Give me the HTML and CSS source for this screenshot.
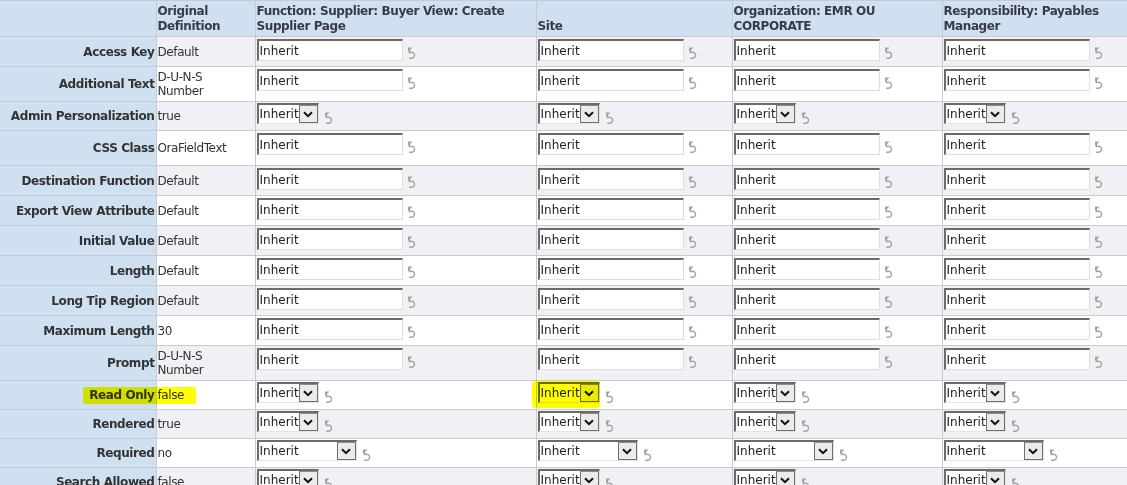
FILE: index.html
```html
<!DOCTYPE html>
<html lang="en">
<head>
<meta charset="utf-8">
<title>Personalization</title>
<link rel="stylesheet" href="styles.css">
</head>
<body>
<svg class="defs" width="0" height="0" aria-hidden="true">
  <symbol id="reset" viewBox="0 0 8 12">
    <path d="M0 0.5 L4.5 0.5 L0 5 Z" fill="#a3a3a3"/>
    <path d="M1.4 2.5 L1.4 5.6 C3 5.1 5.4 5.2 6.3 7 C7.2 9 5.8 11.2 3.6 11.2 L1.2 11.2" fill="none" stroke="#a3a3a3" stroke-width="1.4"/>
  </symbol>
  <symbol id="chev" viewBox="0 0 10 7">
    <path d="M1 1.2 L5 5.2 L9 1.2" fill="none" stroke="#111" stroke-width="2"/>
  </symbol>
</svg>
<div class="page">
<table class="grid">
  <colgroup>
    <col class="c-label"><col class="c-orig"><col class="c-func"><col class="c-site"><col class="c-org"><col class="c-resp">
  </colgroup>
  <thead>
    <tr class="head">
      <th class="corner"></th>
      <th>Original<br>Definition</th>
      <th>Function: Supplier: Buyer View: Create<br>Supplier Page</th>
      <th>Site</th>
      <th>Organization: EMR OU<br>CORPORATE</th>
      <th>Responsibility: Payables<br>Manager</th>
    </tr>
  </thead>
  <tbody>
    <tr class="h30 alt">
      <th class="label">Access Key</th><td class="orig">Default</td>
      <td class="fld"><span class="ctl"><input class="txt" value="Inherit"><svg class="rs"><use href="#reset"/></svg></span></td>
      <td class="fld"><span class="ctl"><input class="txt" value="Inherit"><svg class="rs"><use href="#reset"/></svg></span></td>
      <td class="fld"><span class="ctl"><input class="txt" value="Inherit"><svg class="rs"><use href="#reset"/></svg></span></td>
      <td class="fld"><span class="ctl"><input class="txt" value="Inherit"><svg class="rs"><use href="#reset"/></svg></span></td>
    </tr>
    <tr class="h35">
      <th class="label">Additional Text</th><td class="orig">D-U-N-S<br>Number</td>
      <td class="fld"><span class="ctl"><input class="txt" value="Inherit"><svg class="rs"><use href="#reset"/></svg></span></td>
      <td class="fld"><span class="ctl"><input class="txt" value="Inherit"><svg class="rs"><use href="#reset"/></svg></span></td>
      <td class="fld"><span class="ctl"><input class="txt" value="Inherit"><svg class="rs"><use href="#reset"/></svg></span></td>
      <td class="fld"><span class="ctl"><input class="txt" value="Inherit"><svg class="rs"><use href="#reset"/></svg></span></td>
    </tr>
    <tr class="h29 alt">
      <th class="label">Admin Personalization</th><td class="orig">true</td>
      <td class="fld sfld"><span class="ctl"><span class="sel"><select><option>Inherit</option></select><span class="btn"><svg><use href="#chev"/></svg></span></span><svg class="rs"><use href="#reset"/></svg></span></td>
      <td class="fld sfld"><span class="ctl"><span class="sel"><select><option>Inherit</option></select><span class="btn"><svg><use href="#chev"/></svg></span></span><svg class="rs"><use href="#reset"/></svg></span></td>
      <td class="fld sfld"><span class="ctl"><span class="sel"><select><option>Inherit</option></select><span class="btn"><svg><use href="#chev"/></svg></span></span><svg class="rs"><use href="#reset"/></svg></span></td>
      <td class="fld sfld"><span class="ctl"><span class="sel"><select><option>Inherit</option></select><span class="btn"><svg><use href="#chev"/></svg></span></span><svg class="rs"><use href="#reset"/></svg></span></td>
    </tr>
    <tr class="h35">
      <th class="label">CSS Class</th><td class="orig">OraFieldText</td>
      <td class="fld"><span class="ctl"><input class="txt" value="Inherit"><svg class="rs"><use href="#reset"/></svg></span></td>
      <td class="fld"><span class="ctl"><input class="txt" value="Inherit"><svg class="rs"><use href="#reset"/></svg></span></td>
      <td class="fld"><span class="ctl"><input class="txt" value="Inherit"><svg class="rs"><use href="#reset"/></svg></span></td>
      <td class="fld"><span class="ctl"><input class="txt" value="Inherit"><svg class="rs"><use href="#reset"/></svg></span></td>
    </tr>
    <tr class="h30 alt">
      <th class="label">Destination Function</th><td class="orig">Default</td>
      <td class="fld"><span class="ctl"><input class="txt" value="Inherit"><svg class="rs"><use href="#reset"/></svg></span></td>
      <td class="fld"><span class="ctl"><input class="txt" value="Inherit"><svg class="rs"><use href="#reset"/></svg></span></td>
      <td class="fld"><span class="ctl"><input class="txt" value="Inherit"><svg class="rs"><use href="#reset"/></svg></span></td>
      <td class="fld"><span class="ctl"><input class="txt" value="Inherit"><svg class="rs"><use href="#reset"/></svg></span></td>
    </tr>
    <tr class="h30">
      <th class="label">Export View Attribute</th><td class="orig">Default</td>
      <td class="fld"><span class="ctl"><input class="txt" value="Inherit"><svg class="rs"><use href="#reset"/></svg></span></td>
      <td class="fld"><span class="ctl"><input class="txt" value="Inherit"><svg class="rs"><use href="#reset"/></svg></span></td>
      <td class="fld"><span class="ctl"><input class="txt" value="Inherit"><svg class="rs"><use href="#reset"/></svg></span></td>
      <td class="fld"><span class="ctl"><input class="txt" value="Inherit"><svg class="rs"><use href="#reset"/></svg></span></td>
    </tr>
    <tr class="h30 alt">
      <th class="label">Initial Value</th><td class="orig">Default</td>
      <td class="fld"><span class="ctl"><input class="txt" value="Inherit"><svg class="rs"><use href="#reset"/></svg></span></td>
      <td class="fld"><span class="ctl"><input class="txt" value="Inherit"><svg class="rs"><use href="#reset"/></svg></span></td>
      <td class="fld"><span class="ctl"><input class="txt" value="Inherit"><svg class="rs"><use href="#reset"/></svg></span></td>
      <td class="fld"><span class="ctl"><input class="txt" value="Inherit"><svg class="rs"><use href="#reset"/></svg></span></td>
    </tr>
    <tr class="h30">
      <th class="label">Length</th><td class="orig">Default</td>
      <td class="fld"><span class="ctl"><input class="txt" value="Inherit"><svg class="rs"><use href="#reset"/></svg></span></td>
      <td class="fld"><span class="ctl"><input class="txt" value="Inherit"><svg class="rs"><use href="#reset"/></svg></span></td>
      <td class="fld"><span class="ctl"><input class="txt" value="Inherit"><svg class="rs"><use href="#reset"/></svg></span></td>
      <td class="fld"><span class="ctl"><input class="txt" value="Inherit"><svg class="rs"><use href="#reset"/></svg></span></td>
    </tr>
    <tr class="h30 alt">
      <th class="label">Long Tip Region</th><td class="orig">Default</td>
      <td class="fld"><span class="ctl"><input class="txt" value="Inherit"><svg class="rs"><use href="#reset"/></svg></span></td>
      <td class="fld"><span class="ctl"><input class="txt" value="Inherit"><svg class="rs"><use href="#reset"/></svg></span></td>
      <td class="fld"><span class="ctl"><input class="txt" value="Inherit"><svg class="rs"><use href="#reset"/></svg></span></td>
      <td class="fld"><span class="ctl"><input class="txt" value="Inherit"><svg class="rs"><use href="#reset"/></svg></span></td>
    </tr>
    <tr class="h30">
      <th class="label">Maximum Length</th><td class="orig">30</td>
      <td class="fld"><span class="ctl"><input class="txt" value="Inherit"><svg class="rs"><use href="#reset"/></svg></span></td>
      <td class="fld"><span class="ctl"><input class="txt" value="Inherit"><svg class="rs"><use href="#reset"/></svg></span></td>
      <td class="fld"><span class="ctl"><input class="txt" value="Inherit"><svg class="rs"><use href="#reset"/></svg></span></td>
      <td class="fld"><span class="ctl"><input class="txt" value="Inherit"><svg class="rs"><use href="#reset"/></svg></span></td>
    </tr>
    <tr class="h35 alt">
      <th class="label">Prompt</th><td class="orig">D-U-N-S<br>Number</td>
      <td class="fld"><span class="ctl"><input class="txt" value="Inherit"><svg class="rs"><use href="#reset"/></svg></span></td>
      <td class="fld"><span class="ctl"><input class="txt" value="Inherit"><svg class="rs"><use href="#reset"/></svg></span></td>
      <td class="fld"><span class="ctl"><input class="txt" value="Inherit"><svg class="rs"><use href="#reset"/></svg></span></td>
      <td class="fld"><span class="ctl"><input class="txt" value="Inherit"><svg class="rs"><use href="#reset"/></svg></span></td>
    </tr>
    <tr class="h29">
      <th class="label">Read Only</th><td class="orig">false</td>
      <td class="fld sfld"><span class="ctl"><span class="sel"><select><option>Inherit</option></select><span class="btn"><svg><use href="#chev"/></svg></span></span><svg class="rs"><use href="#reset"/></svg></span></td>
      <td class="fld sfld"><span class="ctl"><span class="sel"><select><option>Inherit</option></select><span class="btn"><svg><use href="#chev"/></svg></span></span><svg class="rs"><use href="#reset"/></svg></span></td>
      <td class="fld sfld"><span class="ctl"><span class="sel"><select><option>Inherit</option></select><span class="btn"><svg><use href="#chev"/></svg></span></span><svg class="rs"><use href="#reset"/></svg></span></td>
      <td class="fld sfld"><span class="ctl"><span class="sel"><select><option>Inherit</option></select><span class="btn"><svg><use href="#chev"/></svg></span></span><svg class="rs"><use href="#reset"/></svg></span></td>
    </tr>
    <tr class="h29 alt">
      <th class="label">Rendered</th><td class="orig">true</td>
      <td class="fld sfld"><span class="ctl"><span class="sel"><select><option>Inherit</option></select><span class="btn"><svg><use href="#chev"/></svg></span></span><svg class="rs"><use href="#reset"/></svg></span></td>
      <td class="fld sfld"><span class="ctl"><span class="sel"><select><option>Inherit</option></select><span class="btn"><svg><use href="#chev"/></svg></span></span><svg class="rs"><use href="#reset"/></svg></span></td>
      <td class="fld sfld"><span class="ctl"><span class="sel"><select><option>Inherit</option></select><span class="btn"><svg><use href="#chev"/></svg></span></span><svg class="rs"><use href="#reset"/></svg></span></td>
      <td class="fld sfld"><span class="ctl"><span class="sel"><select><option>Inherit</option></select><span class="btn"><svg><use href="#chev"/></svg></span></span><svg class="rs"><use href="#reset"/></svg></span></td>
    </tr>
    <tr class="h29">
      <th class="label">Required</th><td class="orig">no</td>
      <td class="fld sfld"><span class="ctl"><span class="sel wide"><select><option>Inherit</option></select><span class="btn"><svg><use href="#chev"/></svg></span></span><svg class="rs"><use href="#reset"/></svg></span></td>
      <td class="fld sfld"><span class="ctl"><span class="sel wide"><select><option>Inherit</option></select><span class="btn"><svg><use href="#chev"/></svg></span></span><svg class="rs"><use href="#reset"/></svg></span></td>
      <td class="fld sfld"><span class="ctl"><span class="sel wide"><select><option>Inherit</option></select><span class="btn"><svg><use href="#chev"/></svg></span></span><svg class="rs"><use href="#reset"/></svg></span></td>
      <td class="fld sfld"><span class="ctl"><span class="sel wide"><select><option>Inherit</option></select><span class="btn"><svg><use href="#chev"/></svg></span></span><svg class="rs"><use href="#reset"/></svg></span></td>
    </tr>
    <tr class="h29 alt">
      <th class="label">Search Allowed</th><td class="orig">false</td>
      <td class="fld sfld"><span class="ctl"><span class="sel"><select><option>Inherit</option></select><span class="btn"><svg><use href="#chev"/></svg></span></span><svg class="rs"><use href="#reset"/></svg></span></td>
      <td class="fld sfld"><span class="ctl"><span class="sel"><select><option>Inherit</option></select><span class="btn"><svg><use href="#chev"/></svg></span></span><svg class="rs"><use href="#reset"/></svg></span></td>
      <td class="fld sfld"><span class="ctl"><span class="sel"><select><option>Inherit</option></select><span class="btn"><svg><use href="#chev"/></svg></span></span><svg class="rs"><use href="#reset"/></svg></span></td>
      <td class="fld sfld"><span class="ctl"><span class="sel"><select><option>Inherit</option></select><span class="btn"><svg><use href="#chev"/></svg></span></span><svg class="rs"><use href="#reset"/></svg></span></td>
    </tr>
  </tbody>
</table>
<div class="hl hl-label"></div>
<div class="hl hl-site"></div>
</div>
</body>
</html>
```

FILE: styles.css
```css
html, body {
  margin: 0;
  padding: 0;
  background: #ffffff;
}
body {
  font-family: "DejaVu Sans", "Liberation Sans", sans-serif;
  font-size: 12px;
  letter-spacing: -0.4px;
  color: #333333;
  overflow: hidden;
}
.defs {
  position: absolute;
  width: 0;
  height: 0;
}
.page {
  position: relative;
  width: 1127px;
}
.grid {
  width: 1127px;
  table-layout: fixed;
  border-collapse: collapse;
  border-top: 1px solid #c9cad2;
}
.c-label { width: 156px; }
.c-orig { width: 99px; }
.c-func { width: 281px; }
.c-site { width: 196px; }
.c-org { width: 210px; }
.c-resp { width: 185px; }

.grid th,
.grid td {
  border: 1px solid #c9cad2;
  padding: 0;
  line-height: 14px;
}
.head { height: 36px; }
.head th {
  background: #cfe0f1;
  color: #3a3a44;
  font-weight: bold;
  text-align: left;
  vertical-align: bottom;
  padding: 0 2px 2px 1px;
  white-space: nowrap;
  line-height: 15px;
}
.head th.corner {
  border-left: 0;
}
.grid tbody th.label {
  background: #cfe0f1;
  text-align: right;
  font-weight: bold;
  color: #333333;
  padding-right: 1px;
  white-space: nowrap;
  vertical-align: middle;
  border-left: 0;
}
.grid td.orig {
  padding-left: 1px;
  vertical-align: middle;
  white-space: nowrap;
}
.alt td {
  background: #f1f1f5;
}
tr.h30 { height: 30px; }
tr.h35 { height: 35px; }
tr.h29 { height: 29px; }

.grid td.fld {
  vertical-align: top;
  padding: 2px 0 0 1px;
}
.grid td.sfld {
  padding-top: 1px;
}
.ctl {
  display: inline-flex;
  align-items: flex-end;
}
.txt {
  box-sizing: border-box;
  width: 146px;
  height: 22px;
  margin: 0;
  padding: 0 0 0 1px;
  border-style: solid;
  border-width: 2px 1px 1px 2px;
  border-color: #6b6b6b #dedede #dedede #6b6b6b;
  background: #ffffff;
  font-family: "DejaVu Sans", sans-serif;
  font-size: 12px;
  letter-spacing: 0;
  color: #222222;
  outline: none;
}
.rs {
  width: 8px;
  height: 12px;
  margin: 0 0 2px 5px;
  flex: none;
}
.sel {
  display: inline-flex;
  box-sizing: border-box;
  height: 21px;
  border-style: solid;
  border-width: 2px 1px 1px 2px;
  border-color: #6b6b6b #e4e4e4 #e4e4e4 #6b6b6b;
  background: #ffffff;
}
.sel select {
  appearance: none;
  -webkit-appearance: none;
  width: 40px;
  height: 100%;
  margin: 0;
  padding: 0 0 0 1px;
  border: 0;
  background: transparent;
  font-family: "DejaVu Sans", sans-serif;
  font-size: 12px;
  letter-spacing: 0;
  color: #222222;
  outline: none;
}
.sel.wide select {
  width: 78px;
}
.sel .btn {
  box-sizing: border-box;
  width: 19px;
  height: 100%;
  border: 1px solid #6e6e6e;
  border-top-color: #8a8a8a;
  background: #ebebeb;
  display: flex;
  align-items: center;
  justify-content: center;
}
.sel .btn svg {
  width: 10px;
  height: 7px;
}
.sfld .rs {
  margin-bottom: 0;
  margin-left: 6px;
}

.hl {
  position: absolute;
  background: #ffff00;
  mix-blend-mode: multiply;
  pointer-events: none;
}
.hl-label {
  left: 83px;
  top: 387px;
  width: 113px;
  height: 17px;
  border-radius: 2px;
}
.hl-site {
  left: 532px;
  top: 381px;
  width: 68px;
  height: 27px;
  border-radius: 3px;
}
```
